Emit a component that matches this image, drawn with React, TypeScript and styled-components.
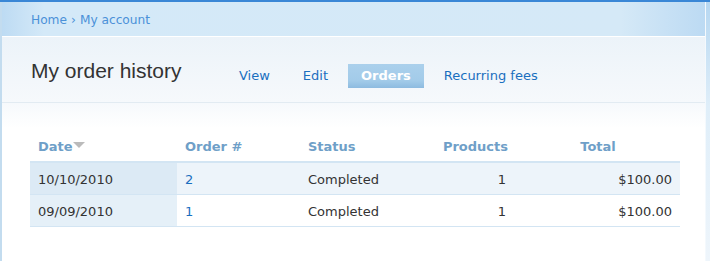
import styled, { createGlobalStyle } from "styled-components";

const GlobalStyle = createGlobalStyle`
  html, body {
    margin: 0;
    padding: 0;
    background: #fff;
  }
  body {
    font-family: "DejaVu Sans", Verdana, sans-serif;
  }
`;

const orders = [
  { date: "10/10/2010", id: "2", status: "Completed", products: 1, total: "$100.00" },
  { date: "09/09/2010", id: "1", status: "Completed", products: 1, total: "$100.00" },
];

const tabs = ["View", "Edit", "Orders", "Recurring fees"];

export default function App() {
  return (
    <>
      <GlobalStyle />
      <Page>
        <Panel>
          <Breadcrumb>
            <Crumb href="#">Home</Crumb>
            <Sep>›</Sep>
            <Crumb href="#">My account</Crumb>
          </Breadcrumb>
          <Header>
            <Title>My order history</Title>
            <Tabs>
              {tabs.map((t) => (
                <Tab key={t} $active={t === "Orders"}>
                  {t}
                </Tab>
              ))}
            </Tabs>
          </Header>
          <Content>
            <Table>
              <colgroup>
                <col style={{ width: 147 }} />
                <col style={{ width: 123 }} />
                <col style={{ width: 134 }} />
                <col style={{ width: 80 }} />
                <col />
              </colgroup>
              <thead>
                <tr>
                  <Th>
                    Date
                    <SortArrow />
                  </Th>
                  <Th>Order #</Th>
                  <Th>Status</Th>
                  <Th $align="right">Products</Th>
                  <Th $align="center">Total</Th>
                </tr>
              </thead>
              <tbody>
                {orders.map((o, i) => (
                  <Row key={o.id} $odd={i % 2 === 0}>
                    <DateCell $odd={i % 2 === 0}>{o.date}</DateCell>
                    <Td>
                      <OrderLink href="#">{o.id}</OrderLink>
                    </Td>
                    <Td>{o.status}</Td>
                    <NumCell>{o.products}</NumCell>
                    <NumCell>{o.total}</NumCell>
                  </Row>
                ))}
              </tbody>
            </Table>
          </Content>
        </Panel>
      </Page>
    </>
  );
}

const Page = styled.div`
  width: 710px;
  height: 261px;
  border-top: 2px solid #3a87d6;
  background: linear-gradient(to bottom, #b6d7f1, #dfeef9 40%, #eef5fb);
  box-sizing: border-box;
  overflow: hidden;
`;

const Panel = styled.div`
  width: 706px;
  height: 100%;
  box-sizing: border-box;
  border-left: 2px solid #c3dcef;
  border-right: 1px solid #f4f9fd;
  background: #fff;
`;

const Breadcrumb = styled.div`
  height: 35px;
  box-sizing: border-box;
  padding: 2px 0 0 29px;
  display: flex;
  align-items: center;
  gap: 4px;
  font-size: 12.2px;
  background: linear-gradient(
    to right,
    #bddbf3 0,
    #d4e9f8 6%,
    #d5e9f7 88%,
    #bcdaf3 100%
  );
  border-bottom: 1px solid #fff;
`;

const Crumb = styled.a`
  color: #4b91d8;
  text-decoration: none;
`;

const Sep = styled.span`
  color: #4b91d8;
`;

const Header = styled.div`
  height: 66px;
  box-sizing: border-box;
  padding: 22px 0 0 29px;
  display: flex;
  align-items: flex-start;
  background: linear-gradient(to bottom, #ecf3f9, #f6f9fc);
  border-bottom: 1px solid #e2ebf2;
`;

const Title = styled.h1`
  margin: 0;
  font-family: "Liberation Sans", Arial, sans-serif;
  font-size: 21px;
  font-weight: normal;
  color: #333;
  line-height: 24px;
  width: 195px;
`;

const Tabs = styled.div`
  display: flex;
  gap: 7px;
  margin-top: 5px;
`;

const Tab = styled.a<{ $active?: boolean }>`
  height: 24px;
  line-height: 24px;
  padding: 0 13px;
  font-size: 13px;
  color: ${(p) => (p.$active ? "#fff" : "#1a6fbf")};
  font-weight: ${(p) => (p.$active ? "bold" : "normal")};
  background: ${(p) =>
    p.$active ? "linear-gradient(to bottom, #abd0ec, #a2cbe9 70%, #8dbbe0)" : "none"};
  text-decoration: none;
`;

const Content = styled.div`
  padding: 30px 0 0 28px;
  background: linear-gradient(to bottom, #f6f9fc, #fff 25px);
  height: 160px;
`;

const Table = styled.table`
  width: 650px;
  border-collapse: collapse;
  font-size: 13px;
  color: #333;
`;

const Th = styled.th<{ $align?: "left" | "right" | "center" }>`
  text-align: ${(p) => p.$align ?? "left"};
  font-weight: bold;
  color: #6f9fc8;
  padding: 0 6px 7px 8px;
  height: 21px;
  vertical-align: bottom;
  border-bottom: 2px solid #d3e5f3;
  white-space: nowrap;
`;

const SortArrow = styled.span`
  display: inline-block;
  width: 0;
  height: 0;
  border-left: 6px solid transparent;
  border-right: 6px solid transparent;
  border-top: 6px solid #bbb;
  vertical-align: 3px;
`;

const Row = styled.tr<{ $odd?: boolean }>`
  background: ${(p) => (p.$odd ? "#edf4fa" : "#fff")};
  border-bottom: 1px solid #d3e5f3;
`;

const Td = styled.td`
  height: 30px;
  padding: 1px 8px 0;
  vertical-align: middle;
`;

const DateCell = styled(Td)<{ $odd?: boolean }>`
  background: ${(p) => (p.$odd ? "#dceaf5" : "#e5f0f8")};
`;

const NumCell = styled(Td)`
  text-align: right;
`;

const OrderLink = styled.a`
  color: #1a6fbf;
  text-decoration: none;
`;
